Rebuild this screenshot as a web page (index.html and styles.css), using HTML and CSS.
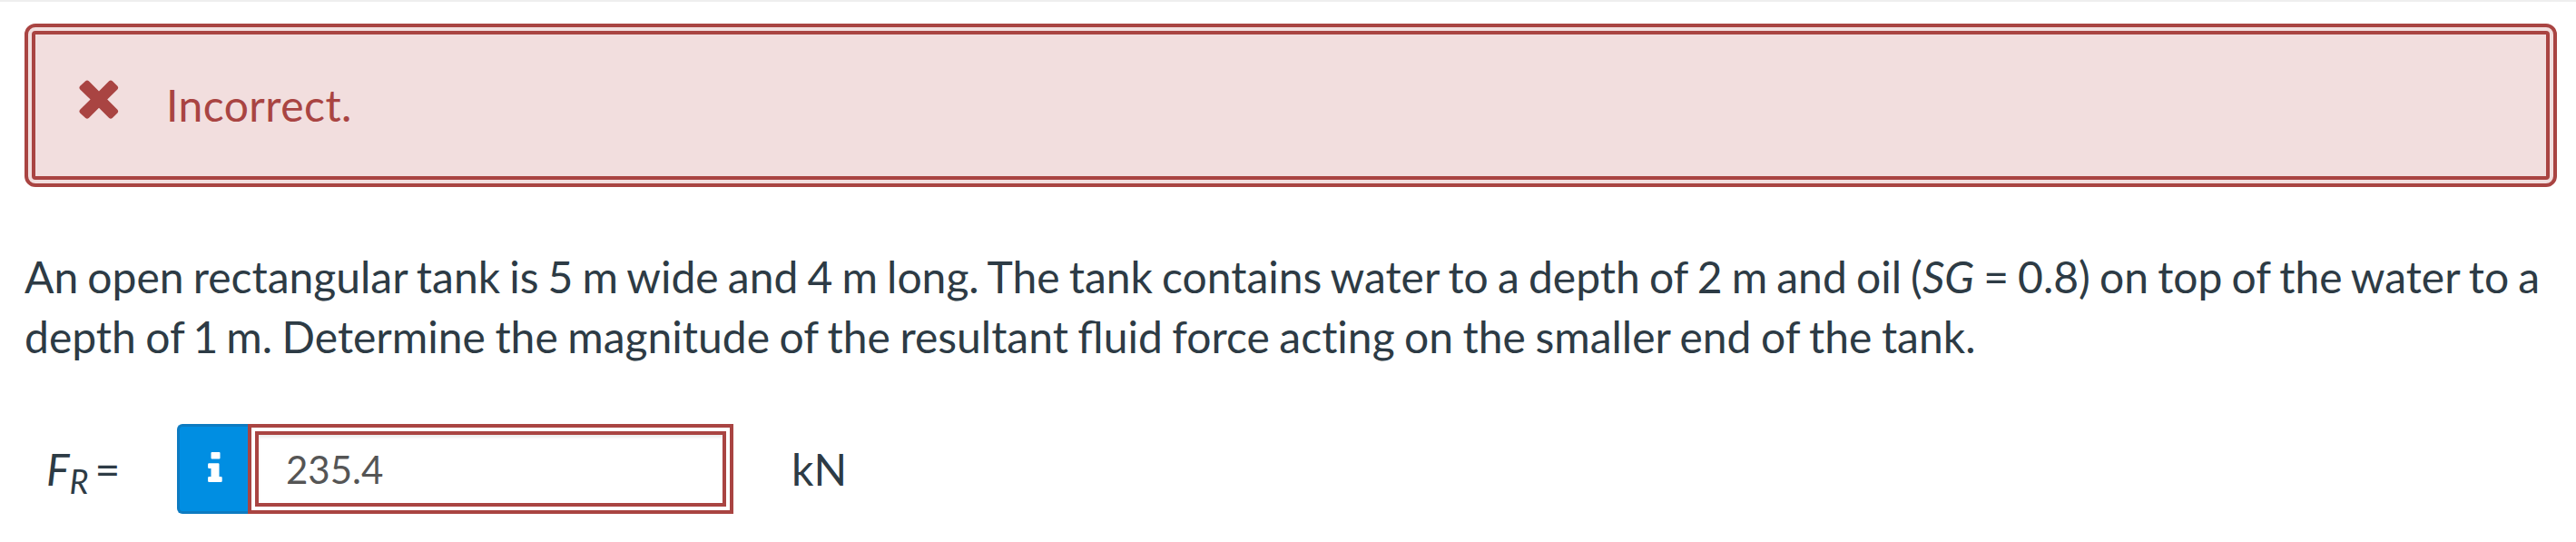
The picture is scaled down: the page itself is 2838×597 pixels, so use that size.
FILE: index.html
```
<!DOCTYPE html>
<html lang="en">
	<head>
		<meta charset="utf-8">
		<title>Question</title>
		<link rel="stylesheet" href="styles.css">
	</head>
	<body>
		<div class="alert" role="alert">
			<svg class="alert-icon" viewBox="0 0 44 44">
				<path d="M7.2 1.2Q9 -.4 10.800 1.200L22 12.400L33.200 1.200Q35 -.4 36.800 1.200L42.400 6.800Q44 8.600 42.400 10.400L31.200 21.600L42.400 32.800Q44 34.600 42.400 36.400L36.800 42Q35 43.600 33.200 42L22 30.800L10.800 42Q9 43.600 7.200 42L1.200 36.400Q-.4 34.600 1.200 32.800L12.600 21.600L1.200 10.400Q-.4 8.600 1.200 6.800Z"/>
			</svg>
			<span class="alert-text">Incorrect.</span>
		</div>

		<p class="question">An open rectangular tank is 5 m wide and 4 m long.<span class="tight"> </span>The tank contains water to a depth of 2 m and oil (<i>SG</i> = 0.8) on top of the water to a<br><span class="last-line">depth of<span class="tight"> </span>1<span class="tight"> </span>m. Determine the magnitude of the resultant fluid force <span class="no-liga">acting</span> on the smaller end of the tank.</span></p>

		<form class="answer" name="answerform">
			<label class="answer-label" for="force"><i>F<sub>R</sub></i><span class="equals">=</span></label>
			<button class="info-button" type="button" aria-label="Information">
				<svg class="info-icon" viewBox="0 0 16 33">
					<path d="M4.500 0h8q1 0 1 1v5.500q0 1-1 1h-8q-1 0-1-1v-5.500q0-1 1-1zM1.300 12.200h10.200q1 0 1 1v13.800h2q1.200 0 1.200 1.200v3.600q0 1.200-1.200 1.200h-13.200q-1.200 0-1.200-1.200v-3.600q0-1.200 1.200-1.200h2.200v-9h-2.200q-1.200 0-1.200-1.200v-3.400q0-1.200 1.200-1.200z"/>
				</svg>
			</button>
			<input class="answer-input" id="force" type="text" name="force" value="235.4">
			<span class="unit">kN</span>
		</form>
	</body>
</html>
```
FILE: styles.css
```
* {
	box-sizing: border-box;
}
body {
	margin: 0px;
	padding: 24px 21px 0px 27px;
	border-top: 2px solid #eeeeee;
	font-family: Lato, sans-serif;
	font-size: 48px;
	line-height: 66px;
	color: #2d3b45;
	background-color: #ffffff;
}
.alert {
	display: flex;
	align-items: flex-start;
	height: 180px;
	padding: 44px 48px;
	color: #a94442;
	background-color: #f2dede;
	border: 12px double #a94442;
	border-radius: 12px;
}
.alert-icon {
	width: 44px;
	height: 44px;
	margin: 6px 52px 0px 0px;
	fill: #a94442;
}
.alert-text {
	margin-top: 1px;
	letter-spacing: 0.45px;
}
.question {
	margin: 66px 0px 0px;
	word-spacing: -2.15px;
	white-space: nowrap;
}
.last-line {
	word-spacing: -1.8px;
}
.tight {
	word-spacing: -3.5px;
}
.no-liga {
	font-variant-ligatures: none;
}
.answer {
	display: flex;
	align-items: center;
	height: 99px;
	margin-top: 63px;
}
.answer-label {
	width: 168px;
	padding-left: 24px;
	white-space: nowrap;
}
.answer-label sub {
	position: relative;
	bottom: -9px;
	font-size: 36px;
	line-height: 0;
	vertical-align: baseline;
}
.equals {
	margin-left: 7px;
}
.info-button {
	display: flex;
	align-items: center;
	justify-content: center;
	width: 78px;
	height: 99px;
	padding: 0px;
	background-color: #008ee2;
	border: 3px solid #0d7bc1;
	border-right: 0px;
	border-radius: 6px 0px 0px 6px;
}
.info-icon {
	width: 16px;
	height: 33px;
	margin: 0px 0px 4px 3px;
	fill: #ffffff;
}
.answer-input {
	width: 535px;
	height: 99px;
	padding: 0px 30px;
	font-family: Lato, sans-serif;
	font-size: 42px;
	color: #555555;
	border: 12px double #a94442;
	border-radius: 0px;
	box-shadow: inset 0px 3px 3px rgba(0, 0, 0, 0.075);
}
.unit {
	margin-left: 64px;
}
```
